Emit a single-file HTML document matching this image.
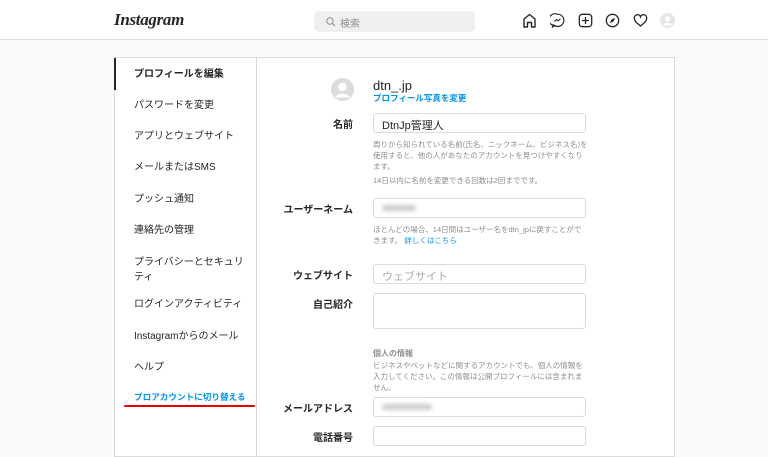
<!DOCTYPE html>
<html><head><meta charset="utf-8"><style>
*{box-sizing:border-box;margin:0;padding:0}
body{width:768px;height:432px;overflow:hidden;background:#fafafa;font-family:"Liberation Sans","Noto Sans CJK JP",sans-serif;color:#262626;position:relative}
.hdr{position:absolute;left:0;top:0;width:768px;height:40px;background:#fff;border-bottom:1px solid #dbdbdb}
.logo{position:absolute;left:114px;top:10px;font-family:"Liberation Serif",serif;font-style:italic;font-weight:bold;font-size:17px;letter-spacing:-0.3px}
.search{position:absolute;left:314px;top:11px;width:161px;height:21px;background:#efefef;border-radius:5px;font-size:10px;color:#8e8e8e;padding:4px 0 0 26px}
.ic{position:absolute;top:13px}
.box{position:absolute;left:114px;top:57px;width:561px;height:400px;background:#fff;border:1px solid #dbdbdb}
.side{position:absolute;left:0;top:0;width:142px;height:100%;border-right:1px solid #dbdbdb}
.si{position:absolute;left:19px;font-size:10px;color:#262626;line-height:13px;white-space:nowrap}
.act{position:absolute;left:-1px;top:0;width:2px;height:32px;background:#262626}
.lbl{position:absolute;right:321px;font-size:10px;font-weight:bold;text-align:right;white-space:nowrap}
.inp{position:absolute;left:258px;width:213px;height:20px;border:1px solid #dbdbdb;border-radius:3px;font-size:11px;padding:3px 8px}
.help{position:absolute;left:258px;width:215px;font-size:7.5px;color:#8e8e8e;line-height:11px}
.blur{display:inline-block;width:34px;height:6px;background:#ccc;border-radius:3px;filter:blur(2px);margin-top:3px}
</style></head><body>
<div class="hdr">
<div class="logo">Instagram</div>
<div class="search"><svg style="position:absolute;left:12px;top:6px" width="10" height="10" viewBox="0 0 10 10"><circle cx="4" cy="4" r="3.2" fill="none" stroke="#8e8e8e" stroke-width="1"/><line x1="6.5" y1="6.5" x2="9" y2="9" stroke="#8e8e8e"/></svg>検索</div>
<svg class="ic" style="left:522px" width="15" height="15" viewBox="0 0 15 15"><path d="M2 14V6l5.5-4.5L13 6v8H9.5V9.5h-4V14z" fill="none" stroke="#262626" stroke-width="1.4" stroke-linejoin="round"/></svg>
<svg class="ic" style="left:550px" width="15" height="15" viewBox="0 0 15 15"><path d="M7.5 1.2a6.2 6 0 1 0-3 11.5L2.5 14l.8-2.2A6 6 0 0 0 7.5 13.5a6.2 6 0 0 0 0-12.3z" fill="none" stroke="#262626" stroke-width="1.2"/><path d="M4.5 8.5l2-2 1.5 1.3 2.5-2" fill="none" stroke="#262626" stroke-width="1.1"/></svg>
<svg class="ic" style="left:578px" width="15" height="15" viewBox="0 0 15 15"><rect x="1.3" y="1.3" width="12.4" height="12.4" rx="3" fill="none" stroke="#262626" stroke-width="1.3"/><path d="M7.5 4v7M4 7.5h7" stroke="#262626" stroke-width="1.3"/></svg>
<svg class="ic" style="left:605px" width="15" height="15" viewBox="0 0 15 15"><circle cx="7.5" cy="7.5" r="6.2" fill="none" stroke="#262626" stroke-width="1.3"/><path d="M10.3 4.7L8.5 8.5 4.7 10.3 6.5 6.5z" fill="#262626"/></svg>
<svg class="ic" style="left:633px" width="15" height="15" viewBox="0 0 15 15"><path d="M7.5 13C4 10.2 1.3 8 1.3 5a3.2 3.2 0 0 1 6.2-1.2A3.2 3.2 0 0 1 13.7 5c0 3-2.7 5.2-6.2 8z" fill="none" stroke="#262626" stroke-width="1.3"/></svg>
<svg class="ic" style="left:660px" width="15" height="15" viewBox="0 0 15 15"><circle cx="7.5" cy="7.5" r="7.5" fill="#e6e6e6"/><circle cx="7.5" cy="6" r="2.7" fill="#fff"/><path d="M2.8 12.5a5 4 0 0 1 9.4 0" fill="#fff"/></svg>
</div>
<div class="box">
<div class="side">
<div class="act"></div>
<div class="si" style="top:10px;font-weight:bold">プロフィールを編集</div>
<div class="si" style="top:41px">パスワードを変更</div>
<div class="si" style="top:72px">アプリとウェブサイト</div>
<div class="si" style="top:103px">メールまたはSMS</div>
<div class="si" style="top:135px">プッシュ通知</div>
<div class="si" style="top:166px">連絡先の管理</div>
<div class="si" style="top:197px;line-height:15px">プライバシーとセキュリ<br>ティ</div>
<div class="si" style="top:240px">ログインアクティビティ</div>
<div class="si" style="top:272px">Instagramからのメール</div>
<div class="si" style="top:303px">ヘルプ</div>
<div class="si" style="top:333px;color:#0095f6;font-weight:bold;font-size:8.6px">プロアカウントに切り替える</div>
<div style="position:absolute;left:9px;top:347px;width:131px;height:2px;background:#e00;border-radius:1px"></div>
</div>
<svg style="position:absolute;left:216px;top:20px" width="23" height="23" viewBox="0 0 23 23"><circle cx="11.5" cy="11.5" r="11.5" fill="#dcdcdc"/><circle cx="11.5" cy="9" r="4.3" fill="#fff"/><path d="M4 19.5a8 6 0 0 1 15 0" fill="#fff"/></svg>
<div style="position:absolute;left:258px;top:20px;font-size:13px">dtn_.jp</div>
<div style="position:absolute;left:258px;top:34px;font-size:8.5px;font-weight:bold;color:#0095f6">プロフィール写真を変更</div>
<div class="lbl" style="top:58px">名前</div>
<div class="inp" style="top:55px">DtnJp管理人</div>
<div class="help" style="top:81px">周りから知られている名前(氏名、ニックネーム、ビジネス名)を使用すると、他の人があなたのアカウントを見つけやすくなります。</div>
<div class="help" style="top:117px">14日以内に名前を変更できる回数は2回までです。</div>
<div class="lbl" style="top:143px">ユーザーネーム</div>
<div class="inp" style="top:140px"><span class="blur"></span></div>
<div class="help" style="top:166px">ほとんどの場合、14日間はユーザー名をdtn_jpに戻すことができます。 <span style="color:#0095f6">詳しくはこちら</span></div>
<div class="lbl" style="top:209px">ウェブサイト</div>
<div class="inp" style="top:206px;color:#aaa">ウェブサイト</div>
<div class="lbl" style="top:238px">自己紹介</div>
<div class="inp" style="top:235px;height:36px"></div>
<div class="help" style="top:290px;font-weight:bold;color:#8e8e8e;font-size:8px">個人の情報</div>
<div class="help" style="top:302px">ビジネスやペットなどに関するアカウントでも、個人の情報を入力してください。この情報は公開プロフィールには含まれません。</div>
<div class="lbl" style="top:342px">メールアドレス</div>
<div class="inp" style="top:339px"><span class="blur" style="width:50px"></span></div>
<div class="lbl" style="top:371px">電話番号</div>
<div class="inp" style="top:368px"></div>
</div>
</body></html>
